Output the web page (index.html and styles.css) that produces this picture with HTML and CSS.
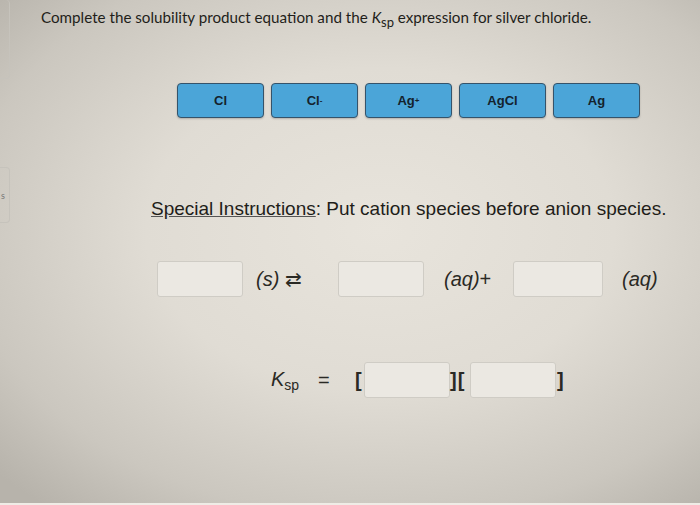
FILE: index.html
```html
<!DOCTYPE html>
<html lang="en">
<head>
  <meta charset="UTF-8" />
  <meta name="viewport" content="width=device-width, initial-scale=1.0" />
  <title>Solubility product</title>
  <link rel="stylesheet" href="styles.css">
</head>
<body>
  <div class="page">
    <div class="side">
      <div class="tab tab-top"></div>
      <div class="tab tab-mid">s</div>
    </div>

    <div class="main">
      <p class="question">Complete the solubility product equation and the <i>K</i><sub>sp</sub> expression for silver chloride.</p>

      <div class="tiles">
        <div class="tile">Cl</div>
        <div class="tile">Cl<sup>-</sup></div>
        <div class="tile">Ag<sup>+</sup></div>
        <div class="tile">AgCl</div>
        <div class="tile">Ag</div>
      </div>

      <p class="note"><u>Special Instructions</u>: Put cation species before anion species.</p>

      <div class="equation">
        <div class="slot"></div>
        <span class="term t1"><i>(s)</i> &#8644;</span>
        <div class="slot"></div>
        <span class="term t2"><i>(aq)</i>+</span>
        <div class="slot wide"></div>
        <span class="term t3"><i>(aq)</i></span>
      </div>

      <div class="ksp">
        <span class="k"><i>K</i><sub>sp</sub></span>
        <span class="eq">=</span>
        <span class="br open">[</span>
        <div class="slot"></div>
        <span class="br mid">][</span>
        <div class="slot"></div>
        <span class="br close">]</span>
      </div>
    </div>
  </div>
  <div class="edge"></div>
</body>
</html>
```

FILE: styles.css
```css
html, body {
  margin: 0;
  height: 505px;
  overflow: hidden;
}
body {
  font-family: Lato, "Liberation Sans", sans-serif;
  color: #25241f;
  background: radial-gradient(ellipse 520px 360px at 380px 230px, #e8e4dc 0%, #e0dcd4 45%, #cbc7bf 80%, #b7b3ab 100%);
}
.page {
  display: flex;
  height: 503px;
}
.side {
  width: 10px;
  flex: none;
}
.tab {
  border: 1px solid #c6c3bc;
  border-left: none;
  border-radius: 0 4px 4px 0;
}
.tab-top {
  height: 78px;
  border-top: none;
}
.tab-mid {
  margin-top: 88px;
  height: 54px;
  font-size: 9px;
  color: #777;
  display: flex;
  align-items: center;
  padding-left: 1px;
}
.main {
  padding-left: 31px;
}
.question {
  margin: 8px 0 0;
  font-size: 15.2px;
  color: #1f1e1a;
}
.question sub {
  font-size: 13px;
  vertical-align: -4px;
}
.tiles {
  display: flex;
  gap: 7px;
  margin: 53px 0 0 136px;
}
.tile {
  width: 85px;
  height: 33px;
  background: #4ba5d8;
  border: 1px solid #35536a;
  border-radius: 4px;
  box-shadow: 0 1px 2px rgba(0, 0, 0, 0.2);
  display: flex;
  align-items: center;
  justify-content: center;
  font-family: "Liberation Sans", Arial, sans-serif;
  font-weight: bold;
  font-size: 13px;
  color: #14222c;
}
.tile sup {
  font-size: 8px;
  vertical-align: 9px;
}
.note {
  margin: 80px 0 0 110px;
  font-family: "Liberation Sans", Arial, sans-serif;
  font-size: 19px;
  color: #1f1e1a;
}
.note u {
  text-decoration-color: #555;
}
.equation, .ksp {
  display: flex;
  align-items: center;
  font-family: "Liberation Sans", Arial, sans-serif;
  font-size: 20px;
  color: #2a2924;
}
.equation {
  margin: 41px 0 0 116px;
}
.slot {
  width: 84px;
  height: 34px;
  border: 1px solid #cfccc5;
  border-radius: 3px;
  background: #ebe8e2;
  flex: none;
}
.slot.wide {
  width: 88px;
}
.term {
  flex: none;
}
.t1 {
  width: 82px;
  padding-left: 13px;
}
.t2 {
  width: 69px;
  padding-left: 20px;
}
.t3 {
  padding-left: 19px;
}
.ksp {
  margin: 65px 0 0 230px;
}
.k {
  width: 47px;
  flex: none;
}
.k sub {
  font-size: 14px;
  vertical-align: -4px;
}
.eq {
  width: 37px;
  flex: none;
}
.br {
  font-weight: bold;
  font-size: 20px;
  flex: none;
}
.br.open {
  width: 9px;
}
.br.mid {
  width: 20px;
  letter-spacing: 1px;
}
.br.close {
  margin-left: 1px;
}
.edge {
  height: 2px;
  background: #efece6;
}
```
